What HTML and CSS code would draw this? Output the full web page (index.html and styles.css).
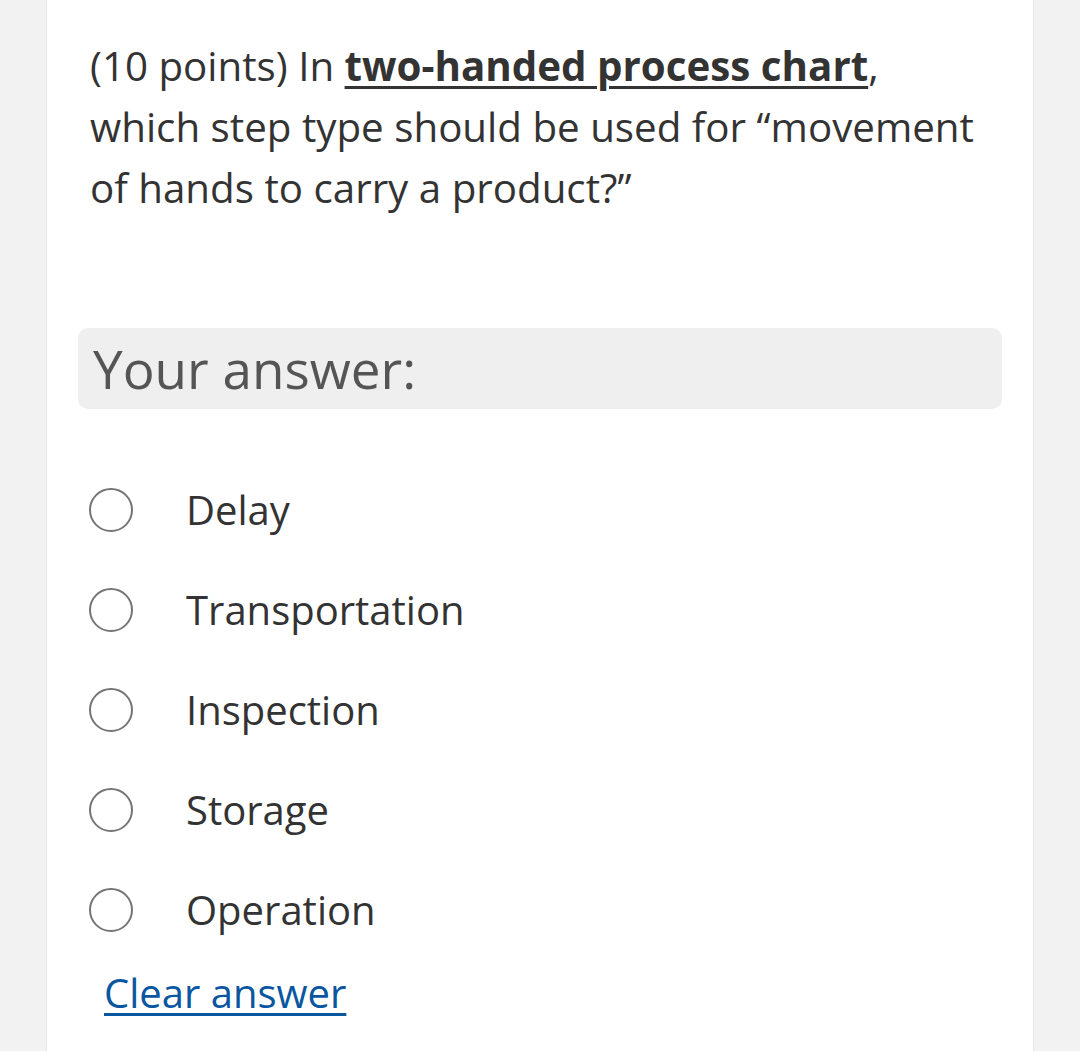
FILE: index.html
```html
<!DOCTYPE html>
<html>
<head>
<meta charset="utf-8">
<link rel="stylesheet" href="styles.css">
</head>
<body>
<div class="card">
  <div class="question">(10 points) In <strong class="term">two-handed process chart</strong>, which step type should be used for “movement of hands to carry a product?”</div>
  <div class="answer-label">Your answer:</div>
  <div class="options">
    <label class="option"><span class="radio"></span><span class="opt-text">Delay</span></label>
    <label class="option"><span class="radio"></span><span class="opt-text">Transportation</span></label>
    <label class="option"><span class="radio"></span><span class="opt-text">Inspection</span></label>
    <label class="option"><span class="radio"></span><span class="opt-text">Storage</span></label>
    <label class="option"><span class="radio"></span><span class="opt-text">Operation</span></label>
  </div>
  <a class="clear" href="#">Clear answer</a>
</div>
</body>
</html>
```
FILE: styles.css
```css
html, body {
  margin: 0;
  padding: 0;
  background: #f2f2f2;
  height: 100%;
  overflow: hidden;
}
body {
  font-family: "Open Sans", "Noto Sans", sans-serif;
  color: #333;
}
.card {
  margin-left: 46px;
  width: 988px;
  min-height: 100%;
  background: #fff;
  border-left: 1px solid #e9e9e9;
  border-right: 1px solid #e9e9e9;
  box-sizing: border-box;
  padding: 35px 31px 0 31px;
  display: flex;
  flex-direction: column;
}
.question {
  font-size: 40.3px;
  line-height: 61px;
  padding: 0 8px 0 12px;
  color: #333;
}
.term {
  font-weight: 700;
  text-decoration: underline;
  text-decoration-thickness: 3px;
  text-underline-offset: 5px;
}
.answer-label {
  margin-top: 110px;
  background: #efefef;
  border-radius: 10px;
  font-size: 53px;
  line-height: 81px;
  padding: 0 15px;
  color: #555;
}
.options {
  margin-top: 51px;
  display: flex;
  flex-direction: column;
}
.option {
  display: flex;
  align-items: center;
  height: 100px;
  padding-left: 11px;
}
.radio {
  width: 44px;
  height: 44px;
  box-sizing: border-box;
  border: 2.5px solid #757575;
  border-radius: 50%;
  flex: none;
}
.opt-text {
  margin-left: 53px;
  font-size: 40px;
  line-height: 100px;
  color: #333;
}
.clear {
  align-self: flex-start;
  margin-left: 26px;
  margin-top: 2px;
  font-size: 40px;
  line-height: 61px;
  color: #0b56a1;
  text-decoration-thickness: 3px;
  text-underline-offset: 5px;
}
```
